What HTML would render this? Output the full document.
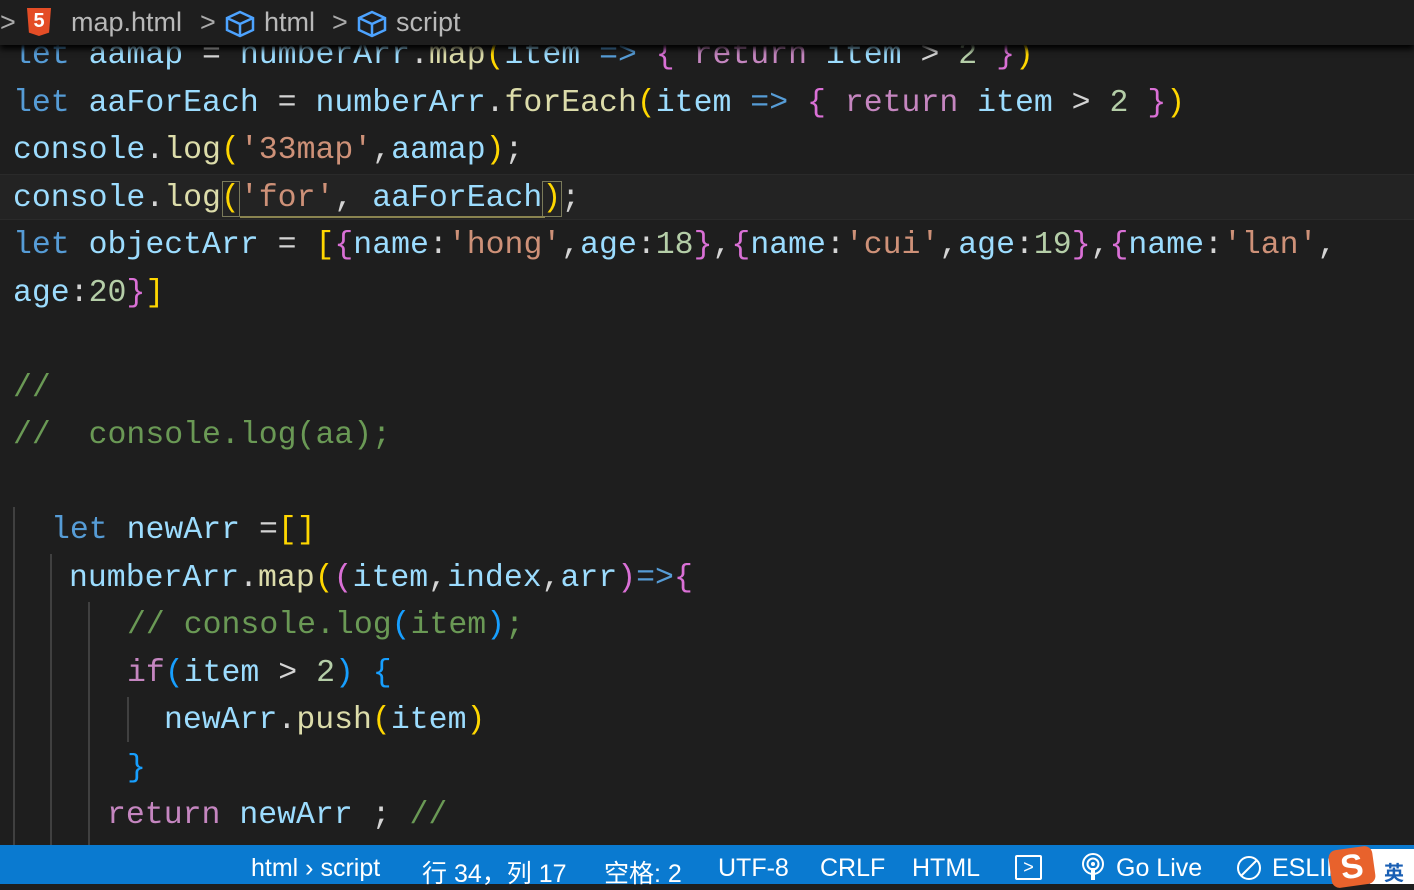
<!DOCTYPE html>
<html><head><meta charset="utf-8"><style>
*{margin:0;padding:0;box-sizing:border-box}
body{width:1414px;height:884px;overflow:hidden;background:#1e1e1e;position:relative;font-family:"Liberation Mono",monospace}
.l{position:absolute;left:13px;height:47.5px;line-height:47.5px;font-size:31.5px;white-space:pre;color:#d4d4d4;margin-top:3px}
.k{color:#569cd6}.v{color:#9cdcfe}.f{color:#dcdcaa}.s{color:#ce9178}.n{color:#b5cea8}.c{color:#6a9955}.p{color:#c586c0}.y{color:#ffd700}.m{color:#da70d6}.b{color:#179fff}
.top{position:absolute;left:0;top:0;width:1414px;height:45px;background:#1e1e1e;box-shadow:0 4px 6px #000;font-family:"Liberation Sans",sans-serif;font-size:27px;color:#b8b8b8;z-index:5}
.top span{position:absolute;top:7px}
.status{position:absolute;left:0;top:845px;width:1414px;height:39px;background:#0a7ad0;color:#fff;font-family:"Liberation Sans","Noto Sans CJK SC",sans-serif;font-size:25px;z-index:5}
.status span{position:absolute;top:9px;white-space:pre}
.guide{position:absolute;width:2px;background:#404040}
</style></head><body>
<div class="top">
<span style="left:0;color:#aaa">&gt;</span>
<div style="position:absolute;left:27px;top:8px;width:24px;height:28px;background:#e44d26;clip-path:polygon(0 0,100% 0,92% 88%,50% 100%,8% 88%);color:#fff;font-size:20px;font-weight:bold;text-align:center;line-height:26px">5</div>
<span style="left:71px">map.html</span>
<span style="left:200px;color:#aaa">&gt;</span>
<svg style="position:absolute;left:225px;top:10px" width="30" height="28" viewBox="0 0 30 28"><path d="M15 2 L28 8 L28 20 L15 26 L2 20 L2 8 Z M2 8 L15 14 L28 8 M15 14 L15 26" fill="none" stroke="#4da3ff" stroke-width="2.5"/></svg>
<span style="left:264px">html</span>
<span style="left:332px;color:#aaa">&gt;</span>
<svg style="position:absolute;left:357px;top:10px" width="30" height="28" viewBox="0 0 30 28"><path d="M15 2 L28 8 L28 20 L15 26 L2 20 L2 8 Z M2 8 L15 14 L28 8 M15 14 L15 26" fill="none" stroke="#4da3ff" stroke-width="2.5"/></svg>
<span style="left:396px">script</span>
</div>

<div style="position:absolute;left:0;top:174px;width:1414px;height:46px;background:#232323;border-top:1px solid #2a2a2a;border-bottom:1px solid #2a2a2a"></div>
<div style="position:absolute;left:222px;top:181px;width:18px;height:36px;border:1px solid #7a7a5a"></div>
<div style="position:absolute;left:542px;top:181px;width:20px;height:36px;border:1px solid #7a7a5a"></div>
<div style="position:absolute;left:240px;top:216px;width:305px;height:2px;background:#8a8450"></div>

<div class="l" style="top:29px"><span class="k">let</span> <span class="v">aamap</span> = <span class="v">numberArr</span>.<span class="f">map</span><span class="y">(</span><span class="v">item</span> <span class="k">=&gt;</span> <span class="m">{</span> <span class="p">return</span> <span class="v">item</span> &gt; <span class="n">2</span> <span class="m">}</span><span class="y">)</span></div>
<div class="l" style="top:76.5px"><span class="k">let</span> <span class="v">aaForEach</span> = <span class="v">numberArr</span>.<span class="f">forEach</span><span class="y">(</span><span class="v">item</span> <span class="k">=&gt;</span> <span class="m">{</span> <span class="p">return</span> <span class="v">item</span> &gt; <span class="n">2</span> <span class="m">}</span><span class="y">)</span></div>
<div class="l" style="top:124px"><span class="v">console</span>.<span class="f">log</span><span class="y">(</span><span class="s">'33map'</span>,<span class="v">aamap</span><span class="y">)</span>;</div>
<div class="l" style="top:171.5px"><span class="v">console</span>.<span class="f">log</span><span class="y">(</span><span class="s">'for'</span>, <span class="v">aaForEach</span><span class="y">)</span>;</div>
<div class="l" style="top:219px"><span class="k">let</span> <span class="v">objectArr</span> = <span class="y">[</span><span class="m">{</span><span class="v">name</span>:<span class="s">'hong'</span>,<span class="v">age</span>:<span class="n">18</span><span class="m">}</span>,<span class="m">{</span><span class="v">name</span>:<span class="s">'cui'</span>,<span class="v">age</span>:<span class="n">19</span><span class="m">}</span>,<span class="m">{</span><span class="v">name</span>:<span class="s">'lan'</span>,</div>
<div class="l" style="top:266.5px"><span class="v">age</span>:<span class="n">20</span><span class="m">}</span><span class="y">]</span></div>
<div class="l c" style="top:361.5px">//</div>
<div class="l c" style="top:409px">//  console.log(aa);</div>

<div class="guide" style="left:13px;top:507px;height:338px"></div>
<div class="guide" style="left:50px;top:554px;height:291px"></div>
<div class="guide" style="left:88px;top:602px;height:243px"></div>
<div class="guide" style="left:127px;top:697px;height:45px"></div>

<div class="l" style="top:504px;left:51px"><span class="k">let</span> <span class="v">newArr</span> =<span class="y">[]</span></div>
<div class="l" style="top:551.5px;left:69px"><span class="v">numberArr</span>.<span class="f">map</span><span class="y">(</span><span class="m">(</span><span class="v">item</span>,<span class="v">index</span>,<span class="v">arr</span><span class="m">)</span><span class="k">=&gt;</span><span class="m">{</span></div>
<div class="l c" style="top:599px;left:127px">// console.log<span class="b">(</span>item<span class="b">)</span>;</div>
<div class="l" style="top:646.5px;left:127px"><span class="p">if</span><span class="b">(</span><span class="v">item</span> &gt; <span class="n">2</span><span class="b">)</span> <span class="b">{</span></div>
<div class="l" style="top:694px;left:164px"><span class="v">newArr</span>.<span class="f">push</span><span class="y">(</span><span class="v">item</span><span class="y">)</span></div>
<div class="l" style="top:741.5px;left:127px"><span class="b">}</span></div>
<div class="l" style="top:789px;left:107px"><span class="p">return</span> <span class="v">newArr</span> ; <span class="c">//</span></div>

<div class="status">
<span style="left:251px">html › script</span>
<span style="left:422px">行 34，列 17</span>
<span style="left:604px">空格: 2</span>
<span style="left:718px">UTF-8</span>
<span style="left:820px">CRLF</span>
<span style="left:912px">HTML</span>
<div style="position:absolute;left:1015px;top:10px;width:27px;height:25px;border:2px solid #fff;border-radius:2px;font-size:18px;line-height:21px;text-align:center">&gt;</div>
<svg style="position:absolute;left:1080px;top:8px" width="26" height="28" viewBox="0 0 26 28"><circle cx="13" cy="11" r="10" fill="none" stroke="#fff" stroke-width="2"/><circle cx="13" cy="11" r="5.5" fill="none" stroke="#fff" stroke-width="2"/><circle cx="13" cy="11" r="2" fill="#fff"/><rect x="11" y="15" width="4" height="12" fill="#fff"/></svg>
<span style="left:1116px">Go Live</span>
<svg style="position:absolute;left:1236px;top:10px" width="26" height="26" viewBox="0 0 26 26"><circle cx="13" cy="13" r="11" fill="none" stroke="#fff" stroke-width="2"/><path d="M5 21 L21 5" stroke="#fff" stroke-width="2"/></svg>
<span style="left:1272px">ESLINT</span>
<div style="position:absolute;left:1370px;top:4px;width:44px;height:35px;background:#fff"></div>
<div style="position:absolute;left:1330px;top:3px;width:44px;height:38px;background:#e8622c;border-radius:8px;transform:rotate(-8deg);color:#fff;font-weight:bold;font-size:34px;line-height:38px;text-align:center;font-family:'Liberation Sans',sans-serif">S</div>
<span style="left:1384px;top:12px;color:#1a5fb4;font-size:20px;font-weight:bold">英</span>
</div>
</body></html>
